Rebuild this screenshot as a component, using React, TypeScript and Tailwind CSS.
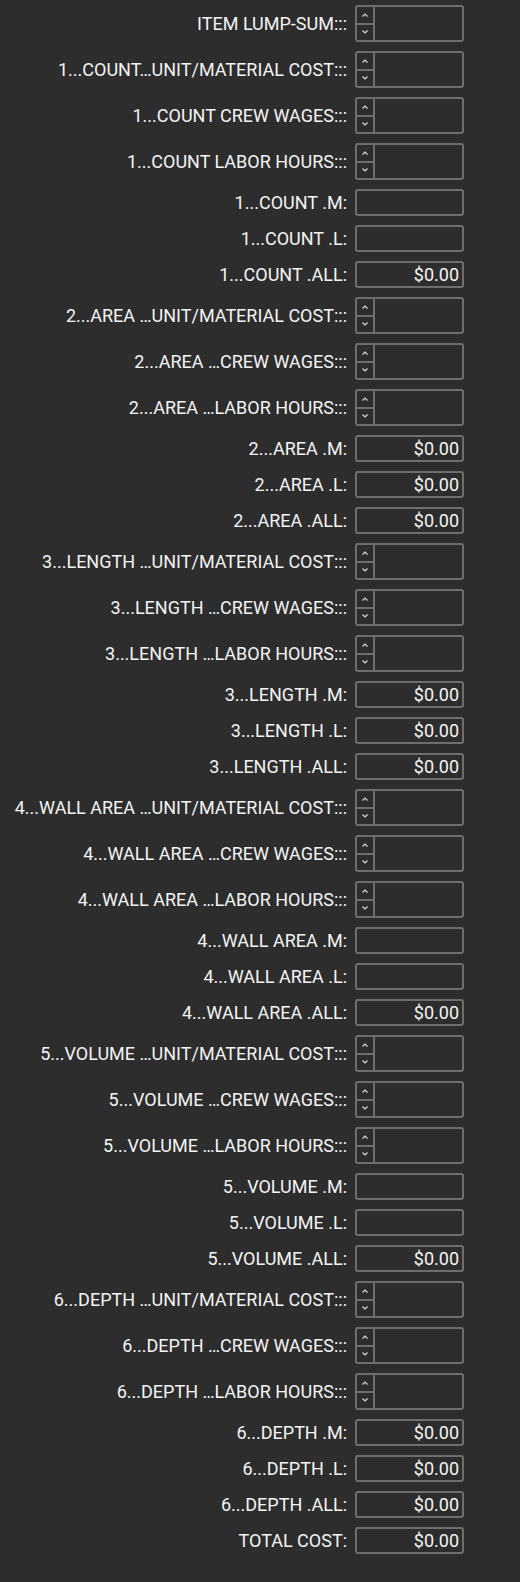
// @ts-nocheck
const categories = [
  { n: '1', name: 'COUNT', sep: '…', wagesSep: ' ', m: '', l: '', all: '$0.00' },
  { n: '2', name: 'AREA', sep: ' …', wagesSep: ' …', m: '$0.00', l: '$0.00', all: '$0.00' },
  { n: '3', name: 'LENGTH', sep: ' …', wagesSep: ' …', m: '$0.00', l: '$0.00', all: '$0.00' },
  { n: '4', name: 'WALL AREA', sep: ' …', wagesSep: ' …', m: '', l: '', all: '$0.00' },
  { n: '5', name: 'VOLUME', sep: ' …', wagesSep: ' …', m: '', l: '', all: '$0.00' },
  { n: '6', name: 'DEPTH', sep: ' …', wagesSep: ' …', m: '$0.00', l: '$0.00', all: '$0.00' },
];

function Chevron({ up }: { up?: boolean }) {
  return (
    <svg width="8" height="6" viewBox="0 0 8 6" className="block">
      <path d={up ? 'M1.5 4.5 L4 2 L6.5 4.5' : 'M1.5 1.5 L4 4 L6.5 1.5'} fill="none" stroke="#d8d8d8" strokeWidth="1.2" />
    </svg>
  );
}

function SpinRow({ label }: { label: string }) {
  return (
    <div className="flex items-center justify-end gap-2">
      <span className="text-[18px] leading-none text-[#f4f4f4] whitespace-nowrap">{label}</span>
      <div className="flex h-[37px] w-[109px] rounded-[3px] border-2 border-[#6e6e6e]">
        <div className="flex w-[18px] flex-col border-r-2 border-[#6e6e6e]">
          <div className="flex flex-1 items-center justify-center border-b-2 border-[#6e6e6e]">
            <Chevron up />
          </div>
          <div className="flex flex-1 items-center justify-center">
            <Chevron />
          </div>
        </div>
        <div className="flex-1" />
      </div>
    </div>
  );
}

function ValueRow({ label, value }: { label: string; value: string }) {
  return (
    <div className="flex items-center justify-end gap-2">
      <span className="text-[18px] leading-none text-[#f4f4f4] whitespace-nowrap">{label}</span>
      <div className="flex h-[27px] w-[109px] items-center justify-end rounded-[3px] border-2 border-[#6e6e6e] pr-[3px] text-[18px] leading-none text-[#f4f4f4]">
        {value}
      </div>
    </div>
  );
}

export default function App() {
  return (
    <div className="min-h-[1582px] w-[520px] bg-[#2d2d2d]" style={{ fontFamily: 'Roboto, "Liberation Sans", sans-serif' }}>
      <div className="flex w-[464px] flex-col gap-[9px] pt-[5px]">
        <SpinRow label="ITEM LUMP-SUM:::" />
        {categories.map(c => {
          const pre = `${c.n}...${c.name}`;
          return (
            <div key={c.n} className="contents">
              <SpinRow label={`${pre}${c.sep}UNIT/MATERIAL COST:::`} />
              <SpinRow label={`${pre}${c.wagesSep}CREW WAGES:::`} />
              <SpinRow label={`${pre}${c.wagesSep}LABOR HOURS:::`} />
              <ValueRow label={`${pre} .M:`} value={c.m} />
              <ValueRow label={`${pre} .L:`} value={c.l} />
              <ValueRow label={`${pre} .ALL:`} value={c.all} />
            </div>
          );
        })}
        <ValueRow label="TOTAL COST:" value="$0.00" />
      </div>
    </div>
  );
}
